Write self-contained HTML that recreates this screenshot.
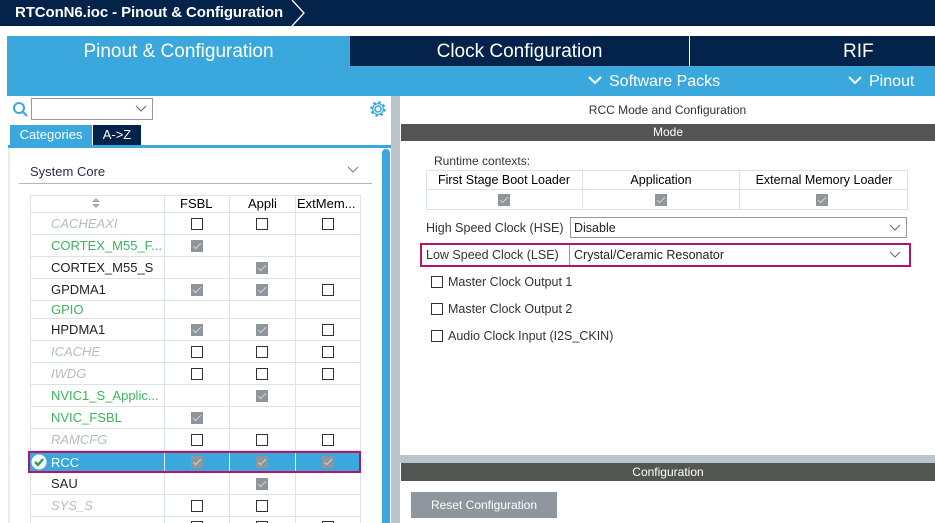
<!DOCTYPE html>
<html style="overflow:hidden;height:523px"><head><meta charset="utf-8"><style>
*{box-sizing:border-box;margin:0;padding:0}
body{width:935px;height:523px;overflow:hidden;background:#fff;font-family:"Liberation Sans",sans-serif;position:relative}
.a{position:absolute}
.cb{position:absolute;width:12px;height:12px;border:1px solid #333;background:#fff}
.ck{position:absolute;width:12px;height:12px;background:#8f969b}
.ck:after{content:"";position:absolute;left:4px;top:1px;width:3px;height:7px;border:solid #cfd3d6;border-width:0 1.5px 1.5px 0;transform:rotate(45deg)}
.row{position:absolute;left:30px;width:330px;border-bottom:1px solid #dde2e6;font-size:13px}
.row span{position:absolute;left:21px}
.vl{position:absolute;top:195px;height:328px;width:1px;background:#dde2e6}
</style></head><body>
<div class="a" style="left:0;top:0;width:935px;height:26px;background:#03234b"></div>
<div class="a" style="left:15px;top:4px;color:#fff;font-weight:bold;font-size:15px;letter-spacing:-0.1px">RTConN6.ioc - Pinout &amp; Configuration</div>
<svg class="a" style="left:290px;top:0" width="20" height="26"><path d="M2 0 L14 13 L2 26" stroke="#fff" stroke-width="1.3" fill="none"/></svg>
<div class="a" style="left:7px;top:36px;width:343px;height:60px;background:#3aa8dc"></div>
<div class="a" style="left:350px;top:36px;width:585px;height:30px;background:#03234b"></div>
<div class="a" style="left:689px;top:36px;width:1px;height:30px;background:#fff"></div>
<div class="a" style="left:350px;top:66px;width:585px;height:30px;background:#3aa8dc"></div>
<div class="a" style="left:7px;top:41px;width:343px;text-align:center;color:#fff;font-size:19px">Pinout &amp; Configuration</div>
<div class="a" style="left:350px;top:41px;width:339px;text-align:center;color:#fff;font-size:19px">Clock Configuration</div>
<div class="a" style="left:843px;top:41px;color:#fff;font-size:19px">RIF</div>
<svg class="a" style="left:588px;top:76px" width="14" height="10"><path d="M1 1 L7 7 L13 1" stroke="#fff" stroke-width="2" fill="none"/></svg>
<div class="a" style="left:609px;top:73px;color:#fff;font-size:16px">Software Packs</div>
<svg class="a" style="left:848px;top:76px" width="14" height="10"><path d="M1 1 L7 7 L13 1" stroke="#fff" stroke-width="2" fill="none"/></svg>
<div class="a" style="left:869px;top:73px;color:#fff;font-size:16px">Pinout</div>
<!-- left panel -->
<svg class="a" style="left:12px;top:101px" width="17" height="17"><circle cx="7" cy="7" r="5" stroke="#3aa8dc" stroke-width="2" fill="none"/><path d="M10.5 10.5 L15 15" stroke="#3aa8dc" stroke-width="2.2"/></svg>
<div class="a" style="left:31px;top:98px;width:122px;height:22px;border:1px solid #999"></div>
<svg class="a" style="left:135px;top:105px" width="12" height="8"><path d="M1 1 L6 6 L11 1" stroke="#666" fill="none"/></svg>
<svg class="a" style="left:369px;top:100px" width="18" height="18"><circle cx="9" cy="9" r="3" stroke="#3aa8dc" stroke-width="1.5" fill="none"/><circle cx="9" cy="9" r="6.5" stroke="#3aa8dc" stroke-width="2.5" stroke-dasharray="2.5 2.6" fill="none"/><circle cx="9" cy="9" r="5.3" stroke="#3aa8dc" stroke-width="1.2" fill="none"/></svg>
<div class="a" style="left:10px;top:125px;width:82px;height:20px;background:#3aa8dc;color:#fff;font-size:13px;text-align:center;line-height:20px">Categories</div>
<div class="a" style="left:93px;top:125px;width:48px;height:20px;background:#03234b;color:#fff;font-size:13px;text-align:center;line-height:20px">A-&gt;Z</div>
<div class="a" style="left:8px;top:145px;width:384px;height:3px;background:#3aa8dc"></div>
<div class="a" style="left:8px;top:148px;width:2px;height:375px;background:#e8ecee"></div>
<div class="a" style="left:382px;top:149px;width:8px;height:374px;background:#3aa8dc;border-radius:4px 4px 0 0"></div>
<div class="a" style="left:391px;top:96px;width:9px;height:427px;background:#b9c4cb"></div>
<div class="a" style="left:30px;top:164px;font-size:13px;color:#2b2b4b">System Core</div>
<svg class="a" style="left:347px;top:166px" width="12" height="8"><path d="M1 1 L6 6 L11 1" stroke="#777" fill="none"/></svg>
<div class="a" style="left:19px;top:183px;width:353px;height:1px;background:#b0b7bc"></div>
<div class="a" style="left:30px;top:195px;width:330px;height:1px;background:#dde2e6"></div>
<div class="vl" style="left:30px"></div><div class="vl" style="left:164px"></div><div class="vl" style="left:229px"></div><div class="vl" style="left:295px"></div><div class="vl" style="left:360px"></div>
<div class="row" style="top:195px;height:18px"><svg class="a" style="left:62px;top:2px" width="8" height="12"><path d="M0 5 L4 1 L8 5Z M0 7 L4 11 L8 7Z" fill="#aaa"/></svg>
<div class="a" style="left:150px;top:1px">FSBL</div><div class="a" style="left:218px;top:1px">Appli</div><div class="a" style="left:267px;top:1px">ExtMem...</div></div>
<div id="rows"></div>
<!-- RCC highlight -->
<div class="a" style="left:28px;top:451px;width:333px;height:22px;background:#3aa8dc;border:2px solid #b5146b"></div>
<div class="a" style="left:164px;top:453px;width:1px;height:18px;background:#d6ecf7"></div>
<div class="a" style="left:229px;top:453px;width:1px;height:18px;background:#d6ecf7"></div>
<div class="a" style="left:295px;top:453px;width:1px;height:18px;background:#d6ecf7"></div>
<svg class="a" style="left:31px;top:454px" width="16" height="16"><circle cx="8" cy="8" r="7.5" fill="#fff"/><path d="M4 8 L7 11 L12 5" stroke="#2ea05a" stroke-width="2.4" fill="none"/></svg>
<div class="a" style="left:51px;top:455px;color:#fff;font-size:13px">RCC</div>
<div class="ck" style="left:191px;top:456px"></div><div class="ck" style="left:256px;top:456px"></div><div class="ck" style="left:322px;top:456px"></div>
<!-- right panel -->
<div class="a" style="left:400px;top:96px;width:535px;height:427px;background:#fff"></div>
<div class="a" style="left:400px;top:103px;width:535px;text-align:center;font-size:12px;color:#333">RCC Mode and Configuration</div>
<div class="a" style="left:401px;top:124px;width:534px;height:17px;background:#535553;color:#fff;font-size:12px;text-align:center;line-height:17px">Mode</div>
<div class="a" style="left:434px;top:154px;font-size:12px;color:#333">Runtime contexts:</div>
<div class="a" style="left:426px;top:170px;width:482px;height:40px;border:1px solid #dde2e6"></div>
<div class="a" style="left:426px;top:189px;width:482px;height:1px;background:#dde2e6"></div>
<div class="a" style="left:582px;top:170px;width:1px;height:40px;background:#dde2e6"></div>
<div class="a" style="left:739px;top:170px;width:1px;height:40px;background:#dde2e6"></div>
<div class="a" style="left:426px;top:173px;width:156px;text-align:center;font-size:12.5px">First Stage Boot Loader</div>
<div class="a" style="left:583px;top:173px;width:156px;text-align:center;font-size:12.5px">Application</div>
<div class="a" style="left:740px;top:173px;width:168px;text-align:center;font-size:12.5px">External Memory Loader</div>
<div class="ck" style="left:498px;top:194px"></div><div class="ck" style="left:655px;top:194px"></div><div class="ck" style="left:816px;top:194px"></div>
<div class="a" style="left:426px;top:221px;font-size:12.5px;color:#333">High Speed Clock (HSE)</div>
<div class="a" style="left:570px;top:217px;width:337px;height:21px;border:1px solid #999;font-size:12.5px;padding:3px 3px;color:#222">Disable</div>
<svg class="a" style="left:889px;top:224px" width="12" height="8"><path d="M1 1 L6 6 L11 1" stroke="#666" fill="none"/></svg>
<div class="a" style="left:420px;top:243px;width:491px;height:24px;border:2px solid #b5146b"></div>
<div class="a" style="left:426px;top:248px;font-size:12.5px;color:#333">Low Speed Clock (LSE)</div>
<div class="a" style="left:569px;top:245px;width:1px;height:20px;background:#999"></div>
<div class="a" style="left:574px;top:248px;font-size:12.5px;color:#222">Crystal/Ceramic Resonator</div>
<svg class="a" style="left:889px;top:251px" width="12" height="8"><path d="M1 1 L6 6 L11 1" stroke="#666" fill="none"/></svg>
<div class="cb" style="left:431px;top:276px"></div><div class="a" style="left:448px;top:275px;font-size:12.5px;color:#333">Master Clock Output 1</div>
<div class="cb" style="left:431px;top:303px"></div><div class="a" style="left:448px;top:302px;font-size:12.5px;color:#333">Master Clock Output 2</div>
<div class="cb" style="left:431px;top:330px"></div><div class="a" style="left:448px;top:329px;font-size:12.5px;color:#333">Audio Clock Input (I2S_CKIN)</div>
<div class="a" style="left:400px;top:455px;width:535px;height:8px;background:#b9c4cb"></div>
<div class="a" style="left:401px;top:463px;width:534px;height:18px;background:#535553;color:#fff;font-size:12px;text-align:center;line-height:18px">Configuration</div>
<div class="a" style="left:411px;top:492px;width:146px;height:26px;background:#8e979d;color:#fff;font-size:12px;text-align:center;line-height:26px">Reset Configuration</div>
<script>
var R=[["CACHEAXI","i",0,0,0,213,22],["CORTEX_M55_F...","g",1,-1,-1,235,22],["CORTEX_M55_S","d",-1,1,-1,257,22],["GPDMA1","d",1,1,0,279,22],["GPIO","g",-1,-1,-1,301,18],["HPDMA1","d",1,1,0,319,22],["ICACHE","i",0,0,0,341,22],["IWDG","i",0,0,0,363,22],["NVIC1_S_Applic...","g",-1,1,-1,385,22],["NVIC_FSBL","g",1,-1,-1,407,22],["RAMCFG","i",0,0,0,429,22],["",  "d",-1,-1,-1,451,22],["SAU","d",-1,1,-1,473,22],["SYS_S","i",0,0,-1,495,22]];
var h="",X=[191,256,322];
R.forEach(function(r){var c=r[1]=="g"?"color:#3cb35c":r[1]=="i"?"color:#b8bcc0;font-style:italic":"color:#222";
h+='<div class="row" style="top:'+r[5]+'px;height:'+r[6]+'px"><span style="top:'+(r[6]==18?1:3)+'px;'+c+'">'+r[0]+'</span></div>';
for(var k=0;k<3;k++){if(r[2+k]<0)continue;var t=r[5]+(r[6]==18?3:5);h+='<div class="'+(r[2+k]?'ck':'cb')+'" style="left:'+X[k]+'px;top:'+t+'px"></div>';}});
h+='<div class="cb" style="left:191px;top:521px"></div><div class="cb" style="left:256px;top:521px"></div><div class="cb" style="left:322px;top:521px"></div>';
document.getElementById("rows").outerHTML=h;
</script>
</body></html>
